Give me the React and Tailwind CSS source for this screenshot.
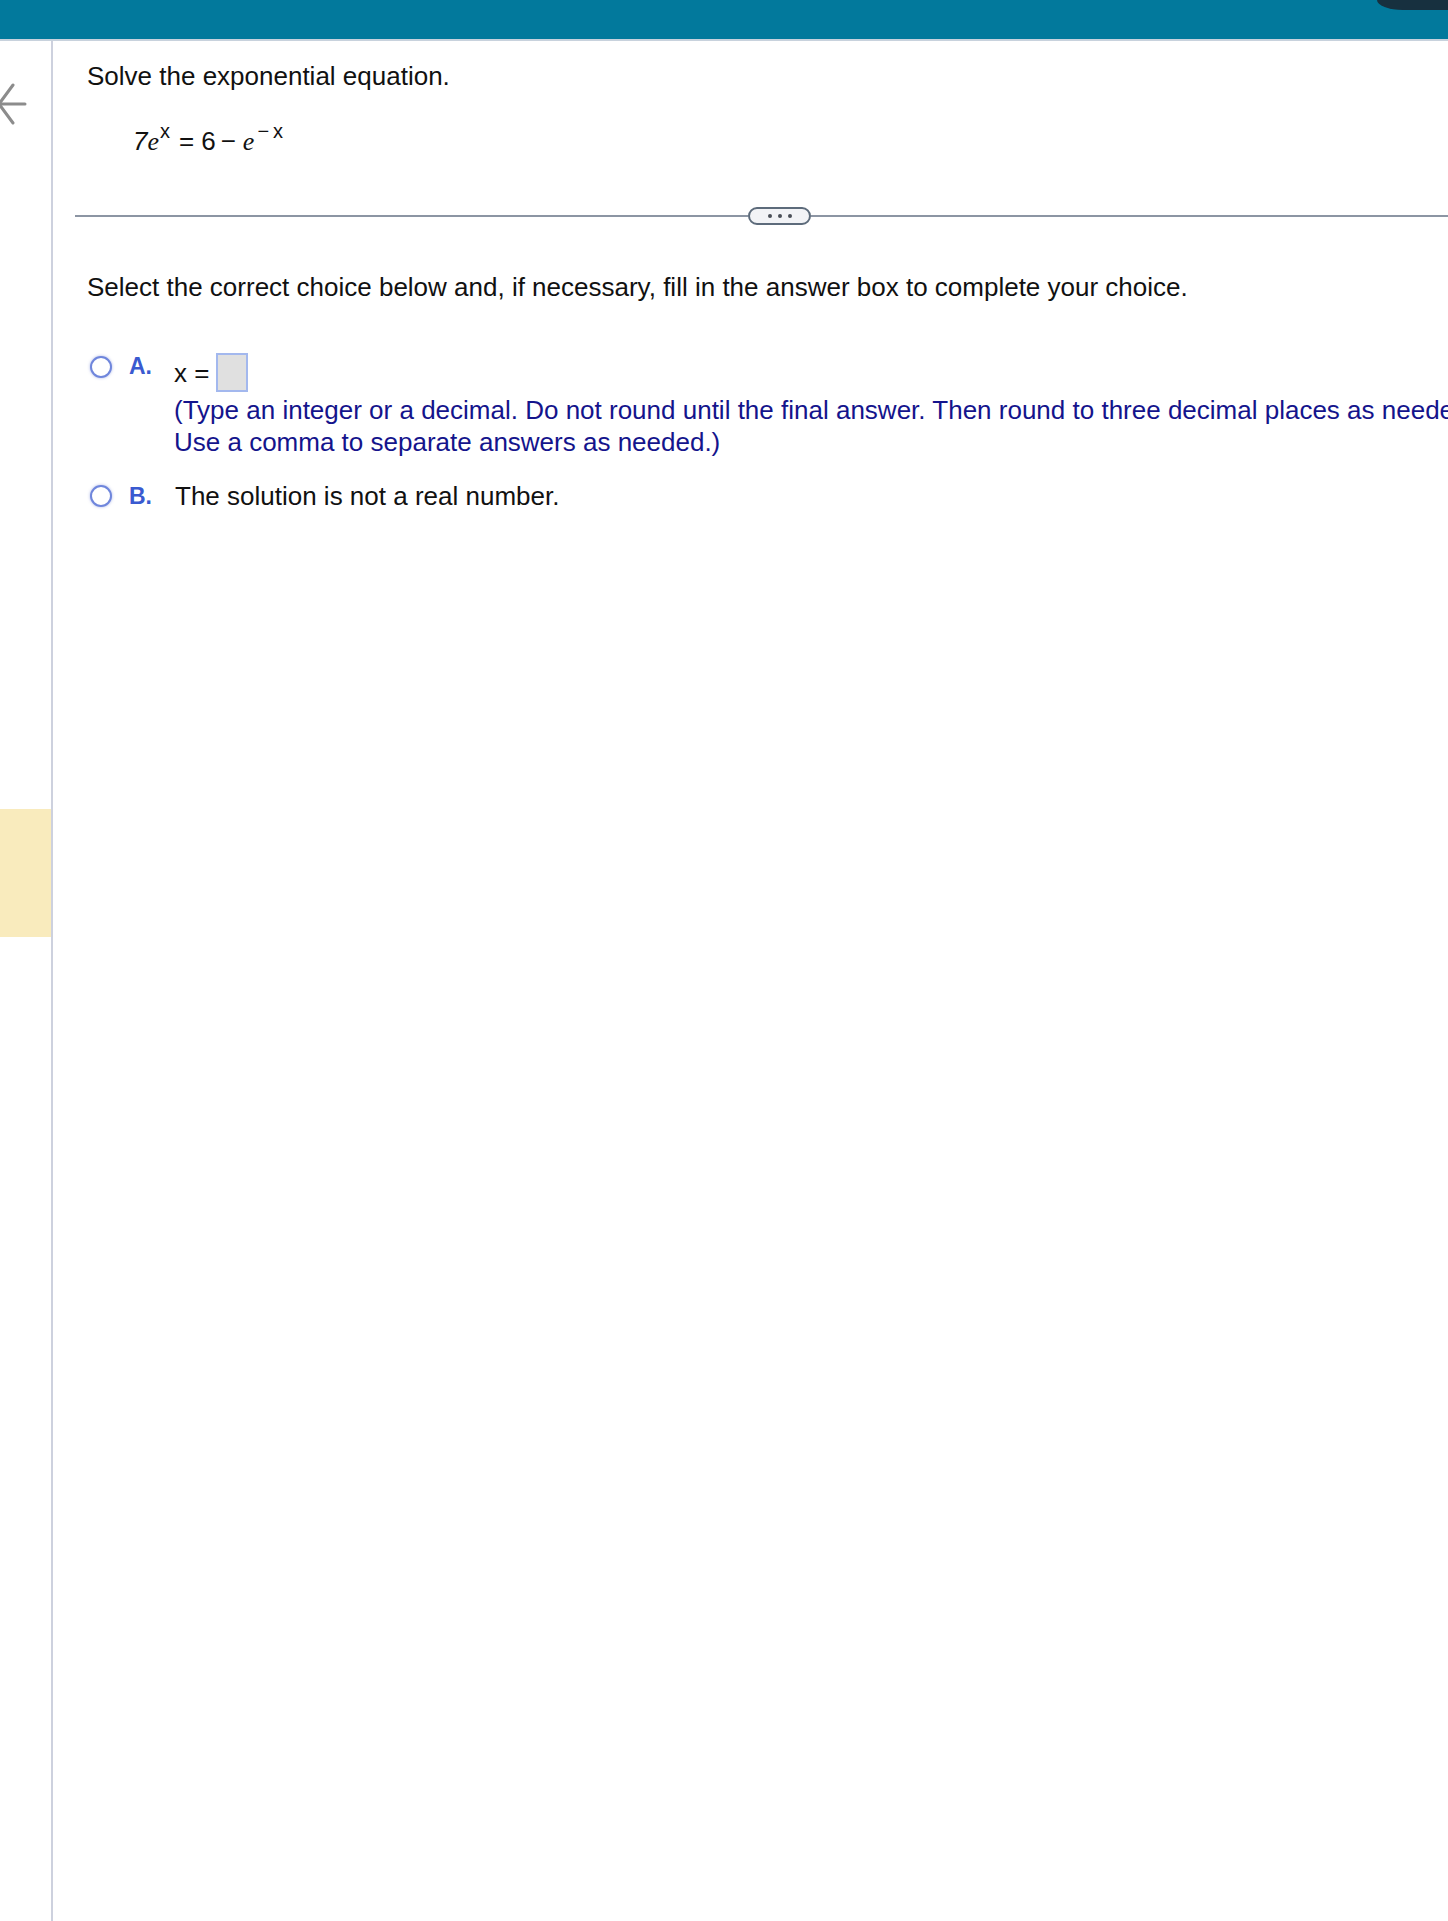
import React from "react";

function Radio() {
  return (
    <div className="w-[22px] h-[22px] rounded-full border-[2.5px] border-[#6f86dc] bg-white shadow-[0_0_3px_rgba(90,110,210,0.5)]" />
  );
}

export default function App() {
  return (
    <div
      className="w-full h-[1921px] overflow-hidden bg-white flex flex-col text-[#111]"
      style={{ fontFamily: '"Liberation Sans", Arial, sans-serif' }}
    >
      {/* top bar */}
      <div className="h-[39px] bg-[#02799c] flex justify-end shrink-0">
        <div className="w-[71px] h-[10px] bg-[#17303f] rounded-bl-[26px_10px]" />
      </div>
      <div className="h-[2px] bg-[#c8d2dd] shrink-0" />

      <div className="flex flex-1 min-h-0">
        {/* sidebar */}
        <div className="w-[53px] shrink-0 border-r-2 border-[#cdd1de] flex flex-col">
          <svg className="mt-[41px] block" width="30" height="44" viewBox="0 0 30 44" fill="none">
            <path d="M-2 22 H25" stroke="#8c8c8c" strokeWidth="3" strokeLinecap="round" />
            <path d="M13 3 L-1 22 L13 41" stroke="#8c8c8c" strokeWidth="3" strokeLinecap="round" strokeLinejoin="round" />
          </svg>
          <div className="mt-[683px] h-[128px] bg-[#f9ebbd]" />
        </div>

        {/* main */}
        <div className="flex-1 min-w-0 flex flex-col">
          <div className="pl-[34px] pt-[19px] text-[26px] leading-[32px] whitespace-nowrap">
            Solve the exponential equation.
          </div>
          <div className="pl-[80px] mt-[33px] text-[26px] leading-[32px] whitespace-nowrap">
            <span className="italic">7</span>
            <span className="italic" style={{ fontFamily: '"Liberation Serif", serif' }}>e</span>
            <span className="relative -top-[12px] text-[20px] ml-[1px]">x</span>
            <span className="ml-[9px]">=</span>
            <span className="ml-[7px]">6</span>
            <span className="ml-[5px]">−</span>
            <span className="ml-[7px] italic" style={{ fontFamily: '"Liberation Serif", serif' }}>e</span>
            <span className="relative -top-[12px] text-[20px] ml-[3px]">−</span>
            <span className="relative -top-[12px] text-[20px] ml-[4px]">x</span>
          </div>

          {/* divider */}
          <div className="ml-[22px] mt-[48px] h-[18px] flex items-center shrink-0">
            <div className="w-[673px] h-[2px] bg-[#8c95a3] shrink-0" />
            <div className="w-[63px] h-[18px] rounded-full border-2 border-[#5d6b7b] bg-[#f2f3f6] flex items-center justify-center gap-[6px] shrink-0">
              <span className="w-[4px] h-[4px] rounded-full bg-[#4a4f57]" />
              <span className="w-[4px] h-[4px] rounded-full bg-[#4a4f57]" />
              <span className="w-[4px] h-[4px] rounded-full bg-[#4a4f57]" />
            </div>
            <div className="flex-1 h-[2px] bg-[#8c95a3]" />
          </div>

          <div className="pl-[34px] mt-[46px] text-[26px] leading-[32px] whitespace-nowrap">
            Select the correct choice below and, if necessary, fill in the answer box to complete your choice.
          </div>

          {/* option A */}
          <div className="pl-[37px] mt-[47px] flex items-start">
            <div className="mt-[6px] shrink-0">
              <Radio />
            </div>
            <div className="ml-[17px] w-[45px] shrink-0 text-[23px] leading-[32px] font-bold text-[#3a5ad0]">A.</div>
            <div className="mt-[3px] flex flex-col shrink-0">
              <div className="flex items-center h-[39px]">
                <span className="text-[26px] leading-[32px]">x =</span>
                <div className="ml-[7px] w-[32px] h-[39px] bg-[#e0e0e0] border-2 border-[#a3b8ee]" />
              </div>
              <div className="mt-[2px] text-[26px] leading-[32px] text-[#14148c] whitespace-nowrap">
                (Type an integer or a decimal. Do not round until the final answer. Then round to three decimal places as needed.)
                <br />
                Use a comma to separate answers as needed.)
              </div>
            </div>
          </div>

          {/* option B */}
          <div className="pl-[37px] mt-[22px] flex items-start">
            <div className="mt-[5px] shrink-0">
              <Radio />
            </div>
            <div className="ml-[17px] w-[46px] shrink-0 text-[23px] leading-[32px] font-bold text-[#3a5ad0]">B.</div>
            <div className="text-[26px] leading-[32px] whitespace-nowrap">The solution is not a real number.</div>
          </div>
        </div>
      </div>
    </div>
  );
}
